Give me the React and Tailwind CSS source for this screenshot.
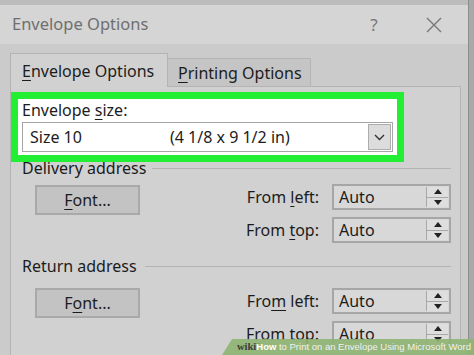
import React from 'react';

const font = { fontFamily: '"Noto Sans", "Open Sans", sans-serif' };

function U({ children }) {
  return <span className="underline underline-offset-[3px] decoration-1">{children}</span>;
}

function Spinner() {
  return (
    <div className="flex flex-col w-[22px] h-full border-l border-[#a8a8a8] bg-[#dedede]">
      <div className="flex-1 flex items-center justify-center border-b border-[#a8a8a8]">
        <svg width="8" height="5" viewBox="0 0 8 5"><path d="M0 5 L4 0 L8 5 Z" fill="#222" /></svg>
      </div>
      <div className="flex-1 flex items-center justify-center">
        <svg width="8" height="5" viewBox="0 0 8 5"><path d="M0 0 L4 5 L8 0 Z" fill="#222" /></svg>
      </div>
    </div>
  );
}

function Field({ label }) {
  return (
    <div className="flex items-center gap-[13px]">
      <span className="text-[16px] text-[#1c1c1c]">{label}</span>
      <div className="flex w-[119px] h-[26px] border-2 border-[#a6a6a6] bg-[#d8d8d8] p-[1px]">
        <span className="flex-1 pl-[4px] text-[16px] leading-[20px] text-[#1c1c1c]">Auto</span>
        <Spinner />
      </div>
    </div>
  );
}

function FontButton({ children }) {
  return (
    <div className="ml-[24px] flex items-center justify-center w-[105px] h-[30px] border-2 border-[#a9a9a9] bg-[#c3c3c3] text-[16px] text-[#1c1c1c]">
      {children}
    </div>
  );
}

function GroupTitle({ children, lineLeft }) {
  return (
    <div className="flex items-center pl-[11px] pr-[9px]">
      <span className="text-[16px] leading-[20px] text-[#1c1c1c]">{children}</span>
      <div className={`flex-1 h-px bg-[#b3b3b3] ${lineLeft}`} />
    </div>
  );
}

export default function App() {
  return (
    <div style={font} className="relative w-[474px] h-[355px] overflow-hidden bg-[#a9a9a9]">
      <div className="w-[469px] h-full border-r border-[#8e8e8e] bg-[#cbcbcb]">
        <div className="h-[5px] bg-[#bcbcbc]" />
        {/* title bar */}
        <div className="flex items-center h-[39px] bg-[#d5d5d5] pl-[12px]">
          <span className="flex-1 text-[16.5px] text-[#6f6f6f]">Envelope Options</span>
          <span className="w-[20px] text-center text-[17px] text-[#777]">?</span>
          <svg className="ml-[42px] mr-[26px]" width="16" height="16" viewBox="0 0 16 16">
            <path d="M1 1 L15 15 M15 1 L1 15" stroke="#777" strokeWidth="1.4" />
          </svg>
        </div>

        {/* tabs */}
        <div className="flex items-end pl-[10px] pt-[9px]">
          <div className="relative z-10 -mb-px w-[158px] h-[34px] border border-b-0 border-[#b4b4b4] bg-[#d1d1d1] pl-[11px] pt-[5px] text-[16px] text-[#1c1c1c]">
            <U>E</U>nvelope Options
          </div>
          <div className="w-[143px] h-[28px] border border-l-0 border-b-0 border-[#b4b4b4] bg-[#c5c5c5] pl-[10px] pt-[2px] text-[16px] text-[#1c1c1c]">
            <U>P</U>rinting Options
          </div>
        </div>

        {/* panel */}
        <div className="ml-[10px] w-[451px] h-[300px] border border-[#b4b4b4] bg-[#d1d1d1] pt-[5px]">
          <div className="w-[393px] border-[7px] border-[#22ef33] bg-white pl-[4px] pt-[1px] pb-[3px]">
            <div className="text-[16px] leading-[21px] text-[#1c1c1c]">Envelope <U>s</U>ize:</div>
            <div className="mt-[1px] flex items-center w-[371px] h-[30px] border border-[#a6a6a6] bg-white p-[1px]">
              <span className="w-[146px] pl-[6px] text-[16px] text-[#1c1c1c]">Size 10</span>
              <span className="flex-1 text-[16px] text-[#1c1c1c]">(4 1/8 x 9 1/2 in)</span>
              <div className="flex items-center justify-center w-[23px] h-full border border-[#adadad] bg-[#dcdcdc]">
                <svg width="11" height="7" viewBox="0 0 11 7"><path d="M1 1 L5.5 5.5 L10 1" stroke="#333" strokeWidth="1.4" fill="none" /></svg>
              </div>
            </div>
          </div>

          {/* delivery address */}
          <div className="-mt-[4px]">
            <GroupTitle lineLeft="ml-[6px]">Delivery address</GroupTitle>
          </div>
          <div className="mt-[7px] flex items-start justify-between pr-[9px]">
            <FontButton><U>F</U>ont...</FontButton>
            <div className="flex flex-col items-end gap-[7px] -mt-[1px]">
              <Field label={<>From <U>l</U>eft:</>} />
              <Field label={<>From <U>t</U>op:</>} />
            </div>
          </div>

          {/* return address */}
          <div className="mt-[13px]">
            <GroupTitle lineLeft="ml-[8px]">Return address</GroupTitle>
          </div>
          <div className="mt-[12px] flex items-start justify-between pr-[9px]">
            <FontButton>F<U>o</U>nt...</FontButton>
            <div className="flex flex-col items-end gap-[7px]">
              <Field label={<>Fro<U>m</U> left:</>} />
              <Field label={<>F<U>r</U>om top:</>} />
            </div>
          </div>
        </div>
      </div>

      {/* watermark */}
      <div
        className="absolute right-0 bottom-0 w-[252px] h-[16px] bg-[#8fb472]/90 flex items-center justify-end pr-[3px]"
        style={{ clipPath: 'polygon(10px 0, 100% 0, 100% 100%, 0 100%)' }}
      >
        <span className="text-[9.5px] leading-none text-[#f1f1f1] whitespace-nowrap" style={{ fontFamily: '"Liberation Sans", Arial, sans-serif' }}>
          <span className="font-bold text-[#3d3d3d] text-[10.5px]" style={{ fontFamily: '"Liberation Serif", serif' }}>wiki</span>
          <span className="font-bold text-white">How</span> to Print on an Envelope Using Microsoft Word
        </span>
      </div>
    </div>
  );
}
